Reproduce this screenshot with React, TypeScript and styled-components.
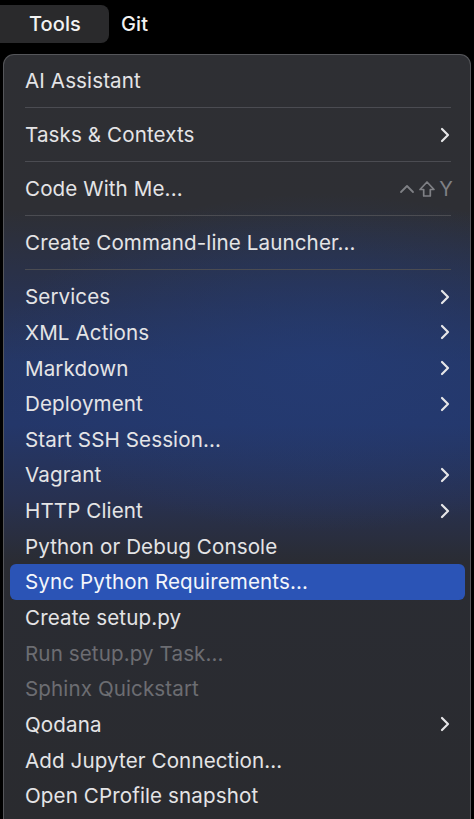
import React from "react";
import styled, { createGlobalStyle } from "styled-components";

const Global = createGlobalStyle`
  html, body { margin: 0; padding: 0; background: #000; }
  body { font-family: Inter, "Noto Sans", "Liberation Sans", sans-serif; -webkit-font-smoothing: antialiased; }
  #root { width: 474px; height: 819px; overflow: hidden; }
`;

const Page = styled.div`
  width: 474px;
  height: 819px;
  background: #000;
  display: flex;
  flex-direction: column;
`;

const MenuBar = styled.div`
  flex: none;
  height: 54px;
  display: flex;
  align-items: flex-start;
  padding-top: 5px;
  box-sizing: border-box;
`;

const BarItem = styled.div<{ $active?: boolean }>`
  height: 38px;
  display: flex;
  align-items: center;
  padding: ${(p) => (p.$active ? "0 28px 0 29px" : "0 12px")};
  border-radius: ${(p) => (p.$active ? "0 8px 8px 0" : "0")};
  background: ${(p) => (p.$active ? "#2a2a2c" : "transparent")};
  color: #f2f2f2;
  font-size: 20px;
  font-weight: 500;
  letter-spacing: 0.1px;
`;

const Panel = styled.div`
  margin: 0 3px;
  flex: 1;
  border: 1px solid #55565a;
  border-bottom: none;
  border-radius: 11px 11px 0 0;
  padding: 8px 5px 10px 6px;
  box-sizing: border-box;
  background:
    radial-gradient(ellipse 70% 22% at 68% 40%, rgba(36, 60, 118, 0.75), rgba(36, 60, 118, 0) 100%),
    linear-gradient(180deg, #2e2f33 0%, #2e2f34 20%, #283251 32%, #253766 40%, #24376a 48%, #283150 58%, #2a2c33 66%, #2a2b2f 100%);
  display: flex;
  flex-direction: column;
`;

const Row = styled.div<{ $selected?: boolean; $disabled?: boolean }>`
  height: 35.65px;
  flex: none;
  display: flex;
  align-items: center;
  padding: 0 14px 0 15px;
  border-radius: 6px;
  background: ${(p) => (p.$selected ? "#2b54b6" : "transparent")};
  color: ${(p) => (p.$disabled ? "#6c6d72" : p.$selected ? "#f4f6fb" : "#e4e4e6")};
  font-size: 20.6px;
  font-weight: 400;
  letter-spacing: 0.1px;
`;

const Label = styled.span`
  flex: 1;
  white-space: nowrap;
`;

const Separator = styled.div`
  height: 18.35px;
  flex: none;
  display: flex;
  align-items: center;
  padding: 0 14px 0 15px;
  &::after {
    content: "";
    flex: 1;
    height: 1px;
    background: #4b4c52;
  }
`;

const Shortcut = styled.span`
  display: flex;
  align-items: center;
  gap: 3px;
  color: #7f8085;
  font-size: 20px;
  margin-right: -2px;
`;

const Chevron = () => (
  <svg width="10" height="16" viewBox="0 0 10 16" style={{ marginRight: 1 }}>
    <path d="M2 2 L8 8 L2 14" fill="none" stroke="#e6e6e8" strokeWidth="2.2" strokeLinecap="round" strokeLinejoin="round" />
  </svg>
);

const Caret = () => (
  <svg width="16" height="12" viewBox="0 0 16 12">
    <path d="M2 9 L8 3 L14 9" fill="none" stroke="#7f8085" strokeWidth="1.8" strokeLinecap="round" strokeLinejoin="round" />
  </svg>
);

const Shift = () => (
  <svg width="18" height="18" viewBox="0 0 18 18">
    <path d="M9 2 L16 9.5 L12.3 9.5 L12.3 16 L5.7 16 L5.7 9.5 L2 9.5 Z" fill="none" stroke="#7f8085" strokeWidth="1.7" strokeLinejoin="round" />
  </svg>
);

type Item =
  | { sep: true }
  | { label: string; sub?: boolean; disabled?: boolean; selected?: boolean; shortcut?: boolean; sep?: false };

const items: Item[] = [
  { label: "AI Assistant" },
  { sep: true },
  { label: "Tasks & Contexts", sub: true },
  { sep: true },
  { label: "Code With Me...", shortcut: true },
  { sep: true },
  { label: "Create Command-line Launcher..." },
  { sep: true },
  { label: "Services", sub: true },
  { label: "XML Actions", sub: true },
  { label: "Markdown", sub: true },
  { label: "Deployment", sub: true },
  { label: "Start SSH Session..." },
  { label: "Vagrant", sub: true },
  { label: "HTTP Client", sub: true },
  { label: "Python or Debug Console" },
  { label: "Sync Python Requirements...", selected: true },
  { label: "Create setup.py" },
  { label: "Run setup.py Task...", disabled: true },
  { label: "Sphinx Quickstart", disabled: true },
  { label: "Qodana", sub: true },
  { label: "Add Jupyter Connection..." },
  { label: "Open CProfile snapshot" },
];

export default function App() {
  return (
    <Page>
      <Global />
      <MenuBar>
        <BarItem $active>Tools</BarItem>
        <BarItem>Git</BarItem>
      </MenuBar>
      <Panel>
        {items.map((it, i) =>
          it.sep ? (
            <Separator key={i} />
          ) : (
            <Row key={i} $selected={it.selected} $disabled={it.disabled}>
              <Label>{it.label}</Label>
              {it.sub && <Chevron />}
              {it.shortcut && (
                <Shortcut>
                  <Caret />
                  <Shift />
                  <span>Y</span>
                </Shortcut>
              )}
            </Row>
          )
        )}
      </Panel>
    </Page>
  );
}
